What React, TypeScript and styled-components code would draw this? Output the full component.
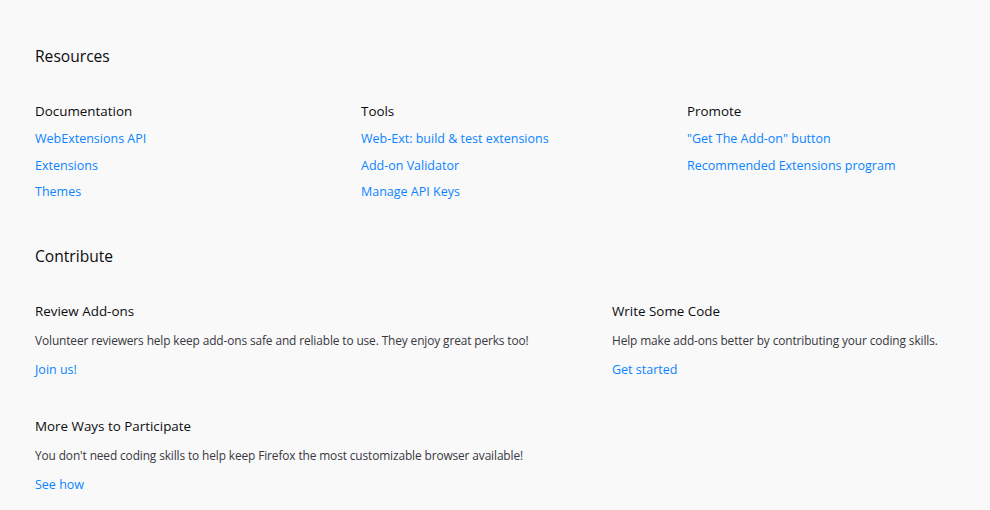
import React from "react";
import styled, { createGlobalStyle } from "styled-components";

const GlobalStyle = createGlobalStyle`
  html, body {
    margin: 0;
    padding: 0;
    background: #f9f9fa;
  }
  body {
    font-family: "Open Sans", "Noto Sans", sans-serif;
    color: #0c0c0d;
  }
`;

const Page = styled.div`
  padding: 44px 35px 0;
  box-sizing: border-box;
  width: 990px;
  height: 510px;
  overflow: hidden;
`;

const SectionTitle = styled.h2<{ $top?: number }>`
  margin: ${(p) => p.$top ?? 0}px 0 0;
  font-size: 15.6px;
  font-weight: 400;
  line-height: 24px;
  color: #0c0c0d;
`;

const ResourceGrid = styled.div`
  display: grid;
  grid-template-columns: 326px 326px 1fr;
  margin-top: 33px;
`;

const ContributeGrid = styled.div`
  display: grid;
  grid-template-columns: 577px 1fr;
  row-gap: 36px;
  margin-top: 33px;
`;

const SubTitle = styled.h3`
  margin: 0;
  font-size: 13.4px;
  font-weight: 400;
  line-height: 20px;
  color: #0c0c0d;
`;

const LinkList = styled.ul`
  list-style: none;
  margin: 8px 0 0;
  padding: 0;
  display: flex;
  flex-direction: column;
  gap: 6.5px;
`;

const Link = styled.a<{ $spaced?: boolean }>`
  display: block;
  margin-top: ${(p) => (p.$spaced ? "10px" : "0")};
  font-size: 12.5px;
  line-height: 20px;
  color: #0a84ff;
  text-decoration: none;
`;

const Text = styled.p`
  margin: 9px 0 0;
  font-size: 11.9px;
  letter-spacing: -0.12px;
  line-height: 20px;
  white-space: nowrap;
  color: #38383d;
`;

const resources = [
  {
    title: "Documentation",
    links: ["WebExtensions API", "Extensions", "Themes"],
  },
  {
    title: "Tools",
    links: ["Web-Ext: build & test extensions", "Add-on Validator", "Manage API Keys"],
  },
  {
    title: "Promote",
    links: ['"Get The Add-on" button', "Recommended Extensions program"],
  },
];

const contribute = [
  {
    title: "Review Add-ons",
    text: "Volunteer reviewers help keep add-ons safe and reliable to use. They enjoy great perks too!",
    link: "Join us!",
  },
  {
    title: "Write Some Code",
    text: "Help make add-ons better by contributing your coding skills.",
    link: "Get started",
  },
  {
    title: "More Ways to Participate",
    text: "You don't need coding skills to help keep Firefox the most customizable browser available!",
    link: "See how",
  },
];

export default function App() {
  return (
    <>
      <GlobalStyle />
      <Page>
        <SectionTitle>Resources</SectionTitle>
        <ResourceGrid>
          {resources.map((col) => (
            <div key={col.title}>
              <SubTitle>{col.title}</SubTitle>
              <LinkList>
                {col.links.map((l) => (
                  <li key={l}>
                    <Link href="#">{l}</Link>
                  </li>
                ))}
              </LinkList>
            </div>
          ))}
        </ResourceGrid>

        <SectionTitle $top={42}>Contribute</SectionTitle>
        <ContributeGrid>
          {contribute.map((c) => (
            <div key={c.title}>
              <SubTitle>{c.title}</SubTitle>
              <Text>{c.text}</Text>
              <Link href="#" $spaced>
                {c.link}
              </Link>
            </div>
          ))}
        </ContributeGrid>
      </Page>
    </>
  );
}
